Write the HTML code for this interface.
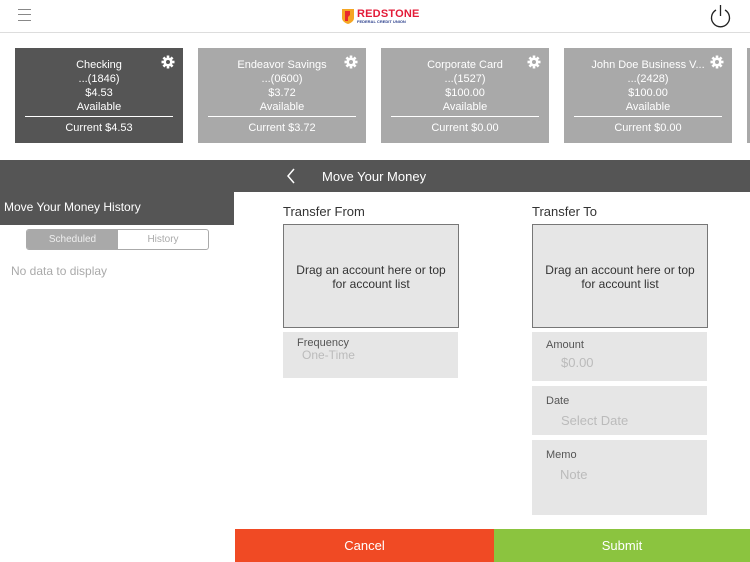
<!DOCTYPE html>
<html><head><style>
*{margin:0;padding:0;box-sizing:border-box}
body{width:750px;height:562px;overflow:hidden;background:#fff;font-family:"Liberation Sans",sans-serif;position:relative}
.a{position:absolute}
.card{position:absolute;top:48px;width:168px;height:95px;color:#fff;font-size:11px;text-align:center;line-height:14px;padding-top:10px}
.card .ln{position:absolute;left:10px;right:10px;top:68px;border-top:1px solid #fff}
.card .cur{position:absolute;left:0;right:0;top:73px}
.card svg{position:absolute;right:8px;top:7px}
.box{position:absolute;background:#e6e6e6}
.lab{position:absolute;font-size:11px;color:#555}
.ph{position:absolute;font-size:13px;color:#bbb}
</style></head><body>
<div class="a" style="left:18px;top:9px;width:13px;height:12px;border-top:1px solid #888;border-bottom:1px solid #888"><div style="margin-top:4px;border-top:1px solid #888"></div></div>
<svg class="a" style="left:341px;top:8px" width="14" height="17" viewBox="0 0 14 17"><path d="M1 1h12v9c0 3-3 5-6 6-3-1-6-3-6-6z" fill="#f5a623"/><path d="M4 3h5v4l-2 2v4H4z" fill="#e8292b"/></svg>
<div class="a" style="left:357px;top:8px;font-size:11px;font-weight:bold;color:#e31b37;letter-spacing:0.2px">REDSTONE</div>
<div class="a" style="left:357px;top:19px;font-size:4px;font-weight:bold;color:#2b3f8c">FEDERAL CREDIT UNION</div>
<svg class="a" style="left:708px;top:4px" width="25" height="25" viewBox="0 0 25 25"><path d="M8 6A9 9 0 1 0 17 6" fill="none" stroke="#222" stroke-width="1.3"/><path d="M12.5 1v11" stroke="#222" stroke-width="1.3"/></svg>
<div class="a" style="left:0;top:32px;width:750px;border-top:1px solid #ddd"></div>

<div class="card" style="left:15px;background:#555">Checking<br>...(1846)<br>$4.53<br>Available<div class="ln"></div><div class="cur">Current $4.53</div><svg width="14" height="14" viewBox="0 0 14 14"><g fill="#fff"><circle cx="7" cy="7" r="4.5"/><rect x="5.7" y="0.5" width="2.6" height="13"/><rect x="0.5" y="5.7" width="13" height="2.6"/><rect x="5.7" y="0.5" width="2.6" height="13" transform="rotate(45 7 7)"/><rect x="5.7" y="0.5" width="2.6" height="13" transform="rotate(-45 7 7)"/></g><circle cx="7" cy="7" r="2" fill="#555"/></svg></div>
<div class="card" style="left:198px;background:#a9a9a9">Endeavor Savings<br>...(0600)<br>$3.72<br>Available<div class="ln"></div><div class="cur">Current $3.72</div><svg width="14" height="14" viewBox="0 0 14 14"><g fill="#fff"><circle cx="7" cy="7" r="4.5"/><rect x="5.7" y="0.5" width="2.6" height="13"/><rect x="0.5" y="5.7" width="13" height="2.6"/><rect x="5.7" y="0.5" width="2.6" height="13" transform="rotate(45 7 7)"/><rect x="5.7" y="0.5" width="2.6" height="13" transform="rotate(-45 7 7)"/></g><circle cx="7" cy="7" r="2" fill="#a9a9a9"/></svg></div>
<div class="card" style="left:381px;background:#a9a9a9">Corporate Card<br>...(1527)<br>$100.00<br>Available<div class="ln"></div><div class="cur">Current $0.00</div><svg width="14" height="14" viewBox="0 0 14 14"><g fill="#fff"><circle cx="7" cy="7" r="4.5"/><rect x="5.7" y="0.5" width="2.6" height="13"/><rect x="0.5" y="5.7" width="13" height="2.6"/><rect x="5.7" y="0.5" width="2.6" height="13" transform="rotate(45 7 7)"/><rect x="5.7" y="0.5" width="2.6" height="13" transform="rotate(-45 7 7)"/></g><circle cx="7" cy="7" r="2" fill="#a9a9a9"/></svg></div>
<div class="card" style="left:564px;background:#a9a9a9">John Doe Business V...<br>...(2428)<br>$100.00<br>Available<div class="ln"></div><div class="cur">Current $0.00</div><svg width="14" height="14" viewBox="0 0 14 14"><g fill="#fff"><circle cx="7" cy="7" r="4.5"/><rect x="5.7" y="0.5" width="2.6" height="13"/><rect x="0.5" y="5.7" width="13" height="2.6"/><rect x="5.7" y="0.5" width="2.6" height="13" transform="rotate(45 7 7)"/><rect x="5.7" y="0.5" width="2.6" height="13" transform="rotate(-45 7 7)"/></g><circle cx="7" cy="7" r="2" fill="#a9a9a9"/></svg></div>
<div class="a" style="left:747px;top:48px;width:3px;height:95px;background:#a9a9a9"></div>

<div class="a" style="left:0;top:160px;width:750px;height:32px;background:#555"></div>
<div class="a" style="left:0;top:192px;width:234px;height:33px;background:#555"></div>
<svg class="a" style="left:286px;top:168px" width="10" height="16" viewBox="0 0 10 16"><path d="M8 1L2 8l6 7" fill="none" stroke="#fff" stroke-width="1.5"/></svg>
<div class="a" style="left:322px;top:169px;font-size:13px;color:#fff">Move Your Money</div>
<div class="a" style="left:4px;top:200px;font-size:12px;color:#fff">Move Your Money History</div>
<div class="a" style="left:26px;top:229px;width:183px;height:21px;border:1px solid #aaa;border-radius:3px;overflow:hidden;font-size:10px"><div style="position:absolute;left:0;top:0;width:91px;height:20px;background:#a9a9a9;color:#eee;text-align:center;line-height:20px">Scheduled</div><div style="position:absolute;left:91px;top:0;right:0;height:20px;color:#aaa;text-align:center;line-height:20px">History</div></div>
<div class="a" style="left:11px;top:264px;font-size:12px;color:#aaa">No data to display</div>

<div class="a" style="left:283px;top:204px;font-size:13px;color:#333">Transfer From</div>
<div class="a" style="left:532px;top:204px;font-size:13px;color:#333">Transfer To</div>
<div class="box" style="left:283px;top:224px;width:176px;height:104px;border:1px solid #777;font-size:12px;color:#333;text-align:center;padding-top:38px;line-height:14px">Drag an account here or top<br>for account list</div>
<div class="box" style="left:532px;top:224px;width:176px;height:104px;border:1px solid #777;font-size:12px;color:#333;text-align:center;padding-top:38px;line-height:14px">Drag an account here or top<br>for account list</div>
<div class="box" style="left:283px;top:332px;width:175px;height:46px"></div>
<div class="lab" style="left:297px;top:337px">Frequency</div>
<div class="ph" style="left:302px;top:348px;font-size:12px">One-Time</div>
<div class="box" style="left:532px;top:332px;width:175px;height:49px"></div>
<div class="lab" style="left:546px;top:339px">Amount</div>
<div class="ph" style="left:561px;top:355px">$0.00</div>
<div class="box" style="left:532px;top:386px;width:175px;height:49px"></div>
<div class="lab" style="left:546px;top:395px">Date</div>
<div class="ph" style="left:561px;top:413px">Select Date</div>
<div class="box" style="left:532px;top:440px;width:175px;height:75px"></div>
<div class="lab" style="left:546px;top:449px">Memo</div>
<div class="ph" style="left:560px;top:467px">Note</div>

<div class="a" style="left:235px;top:529px;width:259px;height:33px;background:#f04a24;color:#fff;font-size:13px;text-align:center;line-height:33px">Cancel</div>
<div class="a" style="left:494px;top:529px;width:256px;height:33px;background:#8bc43f;color:#fff;font-size:13px;text-align:center;line-height:33px">Submit</div>
</body></html>
